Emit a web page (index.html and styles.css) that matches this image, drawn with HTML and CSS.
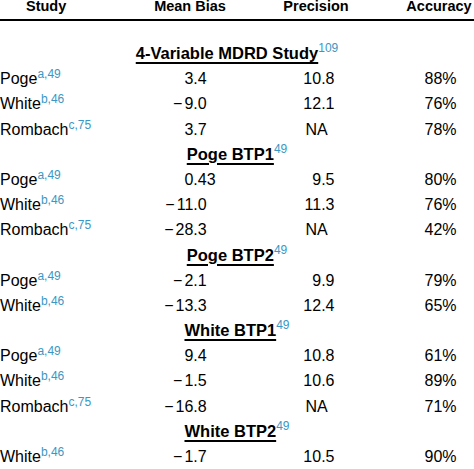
FILE: index.html
```html
<!DOCTYPE html>
<html>
<head>
<meta charset="utf-8">
<link rel="stylesheet" href="styles.css">
</head>
<body>
<div class="table">
  <div class="head">
    <div class="c1">Study</div>
    <div class="c2">Mean Bias</div>
    <div class="c3">Precision</div>
    <div class="c4">Accuracy</div>
  </div>
  <div class="body">
    <div class="section"><span class="title">4-Variable MDRD Study</span><sup class="ref">109</sup></div>
    <div class="row"><div class="c1">Poge<sup>a,49</sup></div><div class="c2"><span class="int">3</span><span class="frac">.4</span></div><div class="c3">10.8</div><div class="c4">88%</div></div>
    <div class="row"><div class="c1">White<sup>b,46</sup></div><div class="c2"><span class="int"><span class="neg">−</span>9</span><span class="frac">.0</span></div><div class="c3">12.1</div><div class="c4">76%</div></div>
    <div class="row"><div class="c1">Rombach<sup>c,75</sup></div><div class="c2"><span class="int">3</span><span class="frac">.7</span></div><div class="c3 na">NA</div><div class="c4">78%</div></div>

    <div class="section"><span class="title">Poge BTP1</span><sup class="ref">49</sup></div>
    <div class="row"><div class="c1">Poge<sup>a,49</sup></div><div class="c2"><span class="int">0</span><span class="frac">.43</span></div><div class="c3">9.5</div><div class="c4">80%</div></div>
    <div class="row"><div class="c1">White<sup>b,46</sup></div><div class="c2"><span class="int"><span class="neg">−</span>11</span><span class="frac">.0</span></div><div class="c3">11.3</div><div class="c4">76%</div></div>
    <div class="row"><div class="c1">Rombach<sup>c,75</sup></div><div class="c2"><span class="int"><span class="neg">−</span>28</span><span class="frac">.3</span></div><div class="c3 na">NA</div><div class="c4">42%</div></div>

    <div class="section"><span class="title">Poge BTP2</span><sup class="ref">49</sup></div>
    <div class="row"><div class="c1">Poge<sup>a,49</sup></div><div class="c2"><span class="int"><span class="neg">−</span>2</span><span class="frac">.1</span></div><div class="c3">9.9</div><div class="c4">79%</div></div>
    <div class="row"><div class="c1">White<sup>b,46</sup></div><div class="c2"><span class="int"><span class="neg">−</span>13</span><span class="frac">.3</span></div><div class="c3">12.4</div><div class="c4">65%</div></div>

    <div class="section"><span class="title">White BTP1</span><sup class="ref">49</sup></div>
    <div class="row"><div class="c1">Poge<sup>a,49</sup></div><div class="c2"><span class="int">9</span><span class="frac">.4</span></div><div class="c3">10.8</div><div class="c4">61%</div></div>
    <div class="row"><div class="c1">White<sup>b,46</sup></div><div class="c2"><span class="int"><span class="neg">−</span>1</span><span class="frac">.5</span></div><div class="c3">10.6</div><div class="c4">89%</div></div>
    <div class="row"><div class="c1">Rombach<sup>c,75</sup></div><div class="c2"><span class="int"><span class="neg">−</span>16</span><span class="frac">.8</span></div><div class="c3 na">NA</div><div class="c4">71%</div></div>

    <div class="section"><span class="title">White BTP2</span><sup class="ref">49</sup></div>
    <div class="row"><div class="c1">White<sup>b,46</sup></div><div class="c2"><span class="int"><span class="neg">−</span>1</span><span class="frac">.7</span></div><div class="c3">10.5</div><div class="c4">90%</div></div>
  </div>
</div>
</body>
</html>
```

FILE: styles.css
```css
html, body {
  margin: 0;
  padding: 0;
  background: #ffffff;
}

body {
  font-family: "Liberation Sans", Arial, Helvetica, sans-serif;
  color: #000000;
  width: 474px;
  height: 469px;
  overflow: hidden;
}

.table {
  width: 474px;
}

.head {
  display: grid;
  grid-template-columns: 124px 132px 148px 70px;
  font-weight: bold;
  font-size: 14.5px;
  line-height: 13px;
  padding-bottom: 6px;
  border-bottom: 2px solid #000000;
  white-space: nowrap;
}

.head .c1 {
  padding-left: 26px;
  text-align: left;
}

.head .c2 {
  text-align: center;
}

.head .c3 {
  text-align: center;
  padding-right: 28px;
}

.head .c4 {
  text-align: center;
}

.body {
  padding-top: 20px;
}

.row {
  display: grid;
  grid-template-columns: 124px 132px 148px 70px;
  height: 25.2px;
  font-size: 16px;
  line-height: 25.2px;
  white-space: nowrap;
}

.section {
  height: 25.2px;
  line-height: 25.2px;
  font-size: 16.5px;
  font-weight: bold;
  text-align: center;
  white-space: nowrap;
}

.title {
  text-decoration: underline;
  text-decoration-thickness: 1.6px;
  text-underline-offset: 2.5px;
}

sup {
  font-size: 12px;
  font-weight: normal;
  line-height: 0;
  vertical-align: 6px;
  color: #3a97c3;
}

.section sup.ref {
  vertical-align: 7.5px;
}

.row .c1 {
  text-align: left;
}

.row .c2 {
  display: flex;
}

.int {
  display: inline-block;
  width: 69.3px;
  text-align: right;
}

.frac {
  display: inline-block;
  text-align: left;
}

.neg {
  margin-right: 2px;
}

.row .c3 {
  text-align: right;
  padding-right: 69.5px;
}

.row .c3.na {
  text-align: center;
  padding-right: 27px;
}

.row .c4 {
  text-align: center;
  padding-left: 3px;
}
```
